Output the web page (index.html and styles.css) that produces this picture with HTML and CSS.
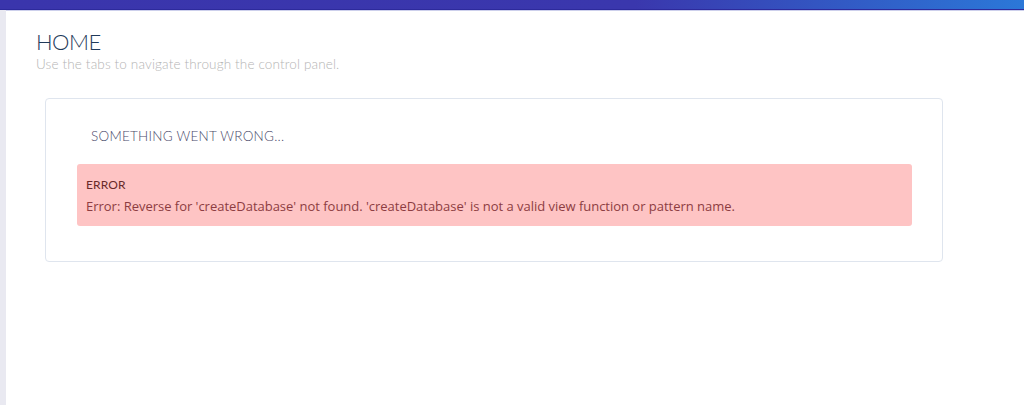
FILE: index.html
```html
<!DOCTYPE html>
<html>
<head>
<meta charset="utf-8">
<link rel="stylesheet" href="styles.css">
</head>
<body>
<div class="topbar"></div>
<div class="layout">
  <aside class="sidebar"></aside>
  <main class="main">
    <header class="page-header">
      <h1 class="page-title">HOME</h1>
      <p class="page-sub">Use the tabs to navigate through the control panel.</p>
    </header>
    <section class="card">
      <h2 class="card-title">SOMETHING WENT WRONG...</h2>
      <div class="alert">
        <div class="alert-head">ERROR</div>
        <div class="alert-body">Error: Reverse for 'createDatabase' not found. 'createDatabase' is not a valid view function or pattern name.</div>
      </div>
    </section>
  </main>
</div>
</body>
</html>
```
FILE: styles.css
```css
html, body {
  margin: 0;
  padding: 0;
  background: #fff;
  height: 100%;
}
body {
  font-family: "Lato", "Open Sans", sans-serif;
  overflow: hidden;
}
.topbar {
  height: 9px;
  background: linear-gradient(90deg, #3a35ac 0%, #3a37ad 62%, #2b78d8 100%);
  border-bottom: 1px solid #2d2a9c;
  box-shadow: 0 1px 0 #cdd0ec;
}
.layout {
  display: flex;
  height: calc(100% - 10px);
}
.sidebar {
  width: 6px;
  background: #e9e9f1;
  flex: none;
}
.main {
  flex: 1;
  padding: 19px 81px 0 30px;
}
.page-title {
  margin: 0;
  font-family: "Lato", sans-serif;
  font-weight: 300;
  font-size: 22px;
  line-height: 26px;
  color: #1f3a5a;
  letter-spacing: -0.5px;
}
.page-sub {
  margin: 1px 0 0;
  font-family: "Lato", sans-serif;
  font-weight: 300;
  font-size: 13.5px;
  line-height: 16px;
  color: #b4b4b4;
  letter-spacing: 0.15px;
}
.card {
  margin: 26px 0 0 9px;
  border: 1px solid #dfe5ee;
  border-radius: 4px;
  padding: 27px 30px 35px 31px;
}
.card-title {
  margin: 0 0 0 14px;
  font-family: "Lato", sans-serif;
  font-weight: 300;
  font-size: 13.5px;
  line-height: 20px;
  color: #4a4a6a;
  letter-spacing: 0.25px;
}
.alert {
  margin-top: 18px;
  background: #fec4c4;
  border-radius: 3px;
  padding: 12px 9px 11px;
}
.alert-head {
  font-family: "Lato", sans-serif;
  font-weight: 400;
  font-size: 12px;
  line-height: 17px;
  color: #6a2a2a;
  letter-spacing: 0.1px;
}
.alert-body {
  margin-top: 5px;
  font-family: "Open Sans", sans-serif;
  font-size: 13px;
  line-height: 17px;
  color: #8d3d42;
  letter-spacing: -0.02px;
}
```
